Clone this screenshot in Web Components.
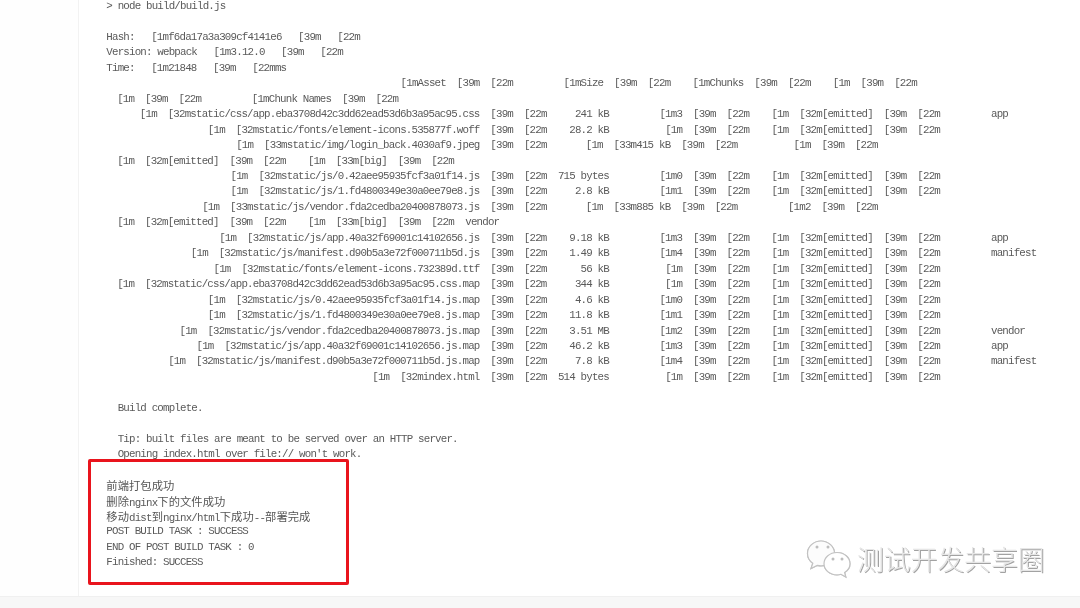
<!DOCTYPE html>
<html><head><meta charset="utf-8"><style>
html,body{margin:0;padding:0;background:#fff;height:100%;overflow:hidden}
</style></head><body>
<doc-page>
<term-log>
<term-line t="> node build/build.js"></term-line>
<term-line t=""></term-line>
<term-line t="Hash: |[1mf6da17a3a309cf4141e6 |[39m |[22m"></term-line>
<term-line t="Version: webpack |[1m3.12.0 |[39m |[22m"></term-line>
<term-line t="Time: |[1m21848 |[39m |[22mms"></term-line>
<term-line n="50" t="|[1mAsset|[39m|[22m       |[1mSize|[39m|[22m  |[1mChunks|[39m|[22m  |[1m|[39m|[22m"></term-line>
<term-line t="|[1m|[39m|[22m       |[1mChunk Names|[39m|[22m"></term-line>
<term-line n="4" t="|[1m|[32mstatic/css/app.eba3708d42c3dd62ead53d6b3a95ac95.css|[39m|[22m     241 kB       |[1m3|[39m|[22m  |[1m|[32m[emitted]|[39m|[22m         app"></term-line>
<term-line n="16" t="|[1m|[32mstatic/fonts/element-icons.535877f.woff|[39m|[22m    28.2 kB        |[1m|[39m|[22m  |[1m|[32m[emitted]|[39m|[22m"></term-line>
<term-line n="21" t="|[1m|[33mstatic/img/login_back.4030af9.jpeg|[39m|[22m     |[1m|[33m415 kB|[39m|[22m        |[1m|[39m|[22m"></term-line>
<term-line t="|[1m|[32m[emitted]|[39m|[22m  |[1m|[33m[big]|[39m|[22m"></term-line>
<term-line n="20" t="|[1m|[32mstatic/js/0.42aee95935fcf3a01f14.js|[39m|[22m  715 bytes       |[1m0|[39m|[22m  |[1m|[32m[emitted]|[39m|[22m"></term-line>
<term-line n="20" t="|[1m|[32mstatic/js/1.fd4800349e30a0ee79e8.js|[39m|[22m     2.8 kB       |[1m1|[39m|[22m  |[1m|[32m[emitted]|[39m|[22m"></term-line>
<term-line n="15" t="|[1m|[33mstatic/js/vendor.fda2cedba20400878073.js|[39m|[22m     |[1m|[33m885 kB|[39m|[22m       |[1m2|[39m|[22m"></term-line>
<term-line t="|[1m|[32m[emitted]|[39m|[22m  |[1m|[33m[big]|[39m|[22m  vendor"></term-line>
<term-line n="18" t="|[1m|[32mstatic/js/app.40a32f69001c14102656.js|[39m|[22m    9.18 kB       |[1m3|[39m|[22m  |[1m|[32m[emitted]|[39m|[22m         app"></term-line>
<term-line n="13" t="|[1m|[32mstatic/js/manifest.d90b5a3e72f000711b5d.js|[39m|[22m    1.49 kB       |[1m4|[39m|[22m  |[1m|[32m[emitted]|[39m|[22m         manifest"></term-line>
<term-line n="17" t="|[1m|[32mstatic/fonts/element-icons.732389d.ttf|[39m|[22m      56 kB        |[1m|[39m|[22m  |[1m|[32m[emitted]|[39m|[22m"></term-line>
<term-line t="|[1m|[32mstatic/css/app.eba3708d42c3dd62ead53d6b3a95ac95.css.map|[39m|[22m     344 kB        |[1m|[39m|[22m  |[1m|[32m[emitted]|[39m|[22m"></term-line>
<term-line n="16" t="|[1m|[32mstatic/js/0.42aee95935fcf3a01f14.js.map|[39m|[22m     4.6 kB       |[1m0|[39m|[22m  |[1m|[32m[emitted]|[39m|[22m"></term-line>
<term-line n="16" t="|[1m|[32mstatic/js/1.fd4800349e30a0ee79e8.js.map|[39m|[22m    11.8 kB       |[1m1|[39m|[22m  |[1m|[32m[emitted]|[39m|[22m"></term-line>
<term-line n="11" t="|[1m|[32mstatic/js/vendor.fda2cedba20400878073.js.map|[39m|[22m    3.51 MB       |[1m2|[39m|[22m  |[1m|[32m[emitted]|[39m|[22m         vendor"></term-line>
<term-line n="14" t="|[1m|[32mstatic/js/app.40a32f69001c14102656.js.map|[39m|[22m    46.2 kB       |[1m3|[39m|[22m  |[1m|[32m[emitted]|[39m|[22m         app"></term-line>
<term-line n="9" t="|[1m|[32mstatic/js/manifest.d90b5a3e72f000711b5d.js.map|[39m|[22m     7.8 kB       |[1m4|[39m|[22m  |[1m|[32m[emitted]|[39m|[22m         manifest"></term-line>
<term-line n="45" t="|[1m|[32mindex.html|[39m|[22m  514 bytes        |[1m|[39m|[22m  |[1m|[32m[emitted]|[39m|[22m"></term-line>
<term-line t=""></term-line>
<term-line t="  Build complete."></term-line>
<term-line t=""></term-line>
<term-line t="  Tip: built files are meant to be served over an HTTP server."></term-line>
<term-line t="  Opening index.html over file:// won't work."></term-line>
<term-line t=""></term-line>
<term-line t="前端打包成功"></term-line>
<term-line t="删除nginx下的文件成功"></term-line>
<term-line t="移动dist到nginx/html下成功--部署完成"></term-line>
<term-line t="POST BUILD TASK : SUCCESS"></term-line>
<term-line t="END OF POST BUILD TASK : 0"></term-line>
<term-line t="Finished: SUCCESS"></term-line>
</term-log>
<red-box></red-box>
<wx-mark>测试开发共享圈</wx-mark>
</doc-page>
<script>
class DocPage extends HTMLElement{constructor(){super();this.attachShadow({mode:'open'}).innerHTML=`<style>
:host{display:flex;flex-direction:column;width:1080px;height:608px;overflow:hidden;position:relative;background:#fff}
.main{flex:1;display:flex;min-height:0}
.rail{width:78px;flex:none;background:#fefefe;border-right:1px solid #f2f2f2}
.body{flex:1;min-width:0;background:#fff;overflow:hidden}
.foot{height:12px;flex:none;background:#f7f7f7;border-top:1px solid #f0f0f0;box-sizing:border-box}
</style><div class="main"><div class="rail"></div><div class="body"><slot></slot></div></div><div class="foot"></div>`}}
class TermLog extends HTMLElement{constructor(){super();this.attachShadow({mode:'open'}).innerHTML=`<style>
:host{display:block;margin:-1px 0 0 27.3px;font:10.8px/15.46px "Liberation Mono","Noto Sans CJK SC",monospace;letter-spacing:-.81px;color:#5a5a5a;filter:blur(.45px)}
</style><slot></slot>`}}
class TermLine extends HTMLElement{connectedCallback(){
 const n=+(this.getAttribute('n')||0),t=this.getAttribute('t')||'';
 const s=this.attachShadow({mode:'open'});
 const esc=x=>x.replace(/&/g,'&amp;').replace(/</g,'&lt;').replace(/>/g,'&gt;');
 const body=esc(' '.repeat(n)+t).split('|').join('<i> </i>').replace(/[\u4e00-\u9fff]+/g,m=>'<b>'+m+'</b>');
 s.innerHTML=`<style>:host{display:block;height:15.46px;white-space:pre}
 i{display:inline-block;width:10.85px;font-style:normal;letter-spacing:0}
 b{font:400 11.3px/15.46px "Noto Sans CJK SC",sans-serif;letter-spacing:.04px;color:#555}</style>`+body;
}}
class RedBox extends HTMLElement{constructor(){super();this.attachShadow({mode:'open'}).innerHTML=`<style>
:host{position:absolute;left:88px;top:459px;width:261px;height:126px;box-sizing:border-box;border:3px solid #e9141d;border-radius:2px}
</style>`}}
class WxMark extends HTMLElement{constructor(){super();this.attachShadow({mode:'open'}).innerHTML=`<style>
:host{position:absolute;left:806px;top:539px;display:flex;align-items:center;gap:5px;font:300 26.8px/40px "Noto Sans CJK SC",sans-serif;color:#e6e6e6;text-shadow:1px 1px 0 #a2a2a2;white-space:nowrap;filter:blur(.3px)}
svg{width:46px;height:40px;flex:none;filter:drop-shadow(.8px .8px 0 #c8c8c8)}
</style><svg viewBox="0 1 46 40" fill="none"><g stroke="#c2c2c2" stroke-width="1.2">
<path d="M15 3C7.800 3 1.500 8.500 1.500 15.500c0 4 2 7.500 5.300 9.700L5 30.500l6.200-3.100c1.200.3 2.500.5 3.800.5 7.200 0 13.500-5.500 13.500-12.400S22.200 3 15 3z" fill="#fcfcfc"/>
<path d="M31 14.500c-7.200 0-13 5-13 11.200s5.800 11.200 13 11.200c1.400 0 2.800-.2 4-.6l4.800 2.700-1.200-4.500c3.300-2 5.400-5.200 5.400-8.800 0-6.200-5.800-11.200-13-11.200z" fill="#fff"/></g>
<g fill="#bdbdbd"><circle cx="11" cy="9" r="1.500"/><circle cx="22" cy="9" r="1.500"/><circle cx="27" cy="21" r="1.500"/><circle cx="36" cy="21" r="1.500"/></g></svg><slot></slot>`}}
customElements.define('doc-page',DocPage);
customElements.define('term-log',TermLog);
customElements.define('term-line',TermLine);
customElements.define('red-box',RedBox);
customElements.define('wx-mark',WxMark);
</script>
</body></html>
